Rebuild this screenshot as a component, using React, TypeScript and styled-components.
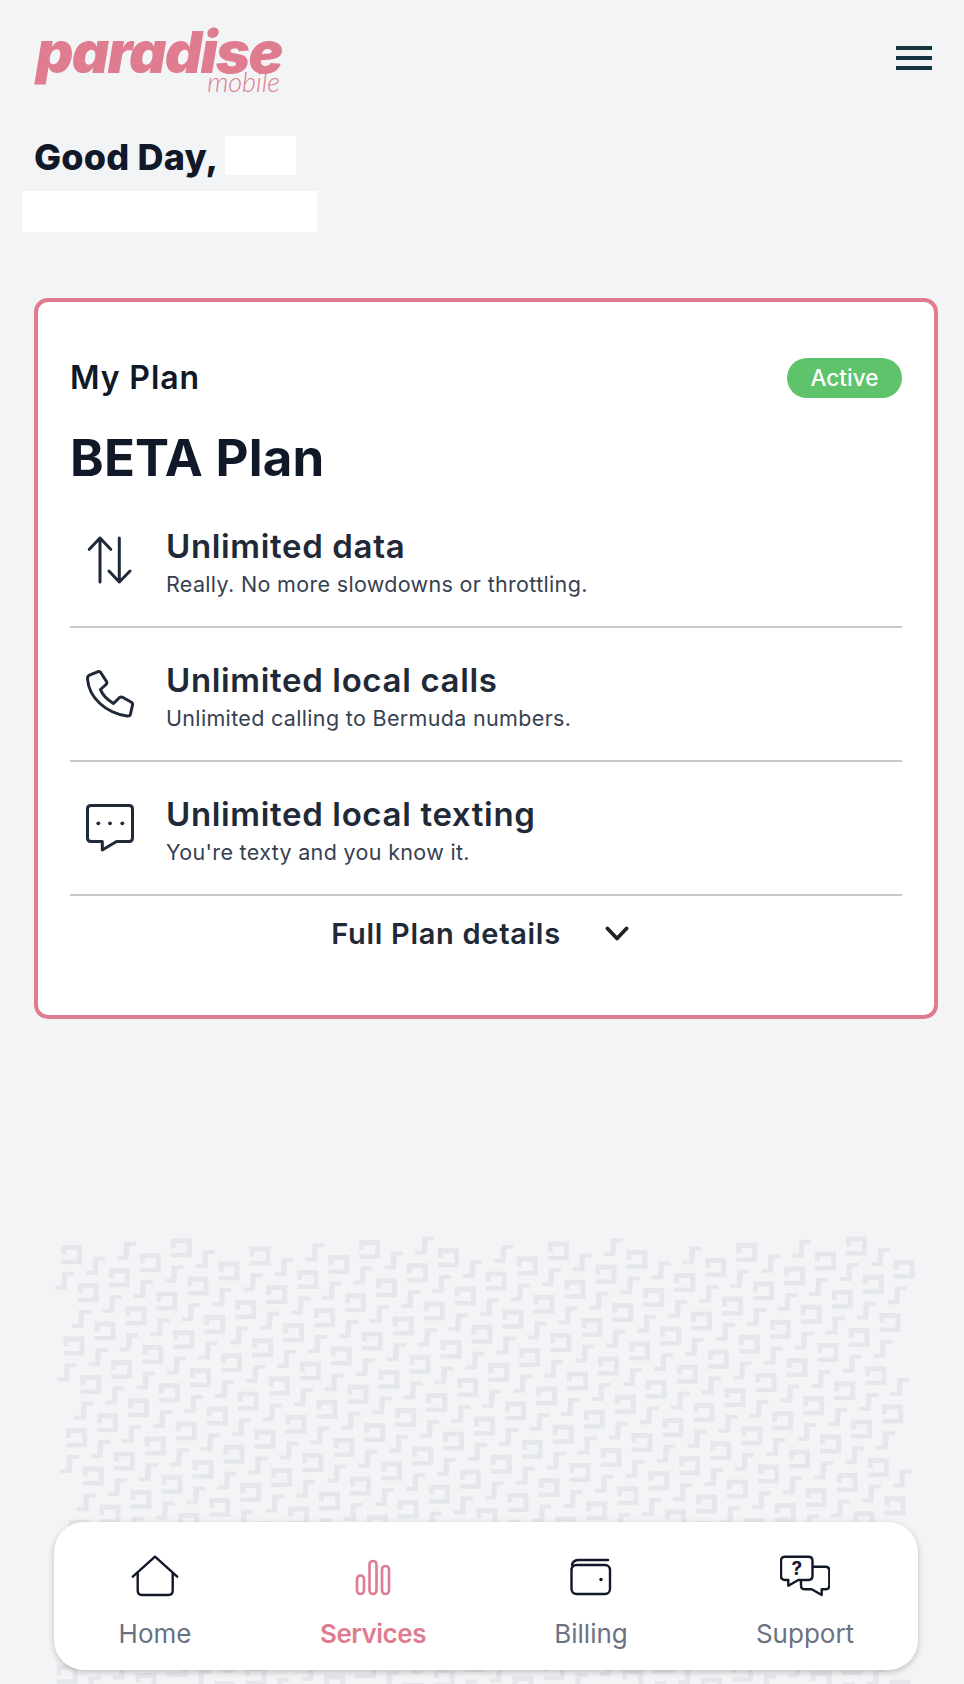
import React from "react";
import styled, { createGlobalStyle } from "styled-components";

const PINK = "#df7c90";
const INK = "#1f2937";
const FONT = `Inter, "Liberation Sans", sans-serif`;

const GlobalStyle = createGlobalStyle`
    html, body {
        margin: 0;
        padding: 0;
        background: #f3f4f6;
    }
    * {
        box-sizing: border-box;
    }
`;

type IconProps = { color?: string };

const ArrowsIcon = () => (
    <svg width="48" height="48" viewBox="0 0 48 48" fill="none" stroke={INK} strokeWidth="3" strokeLinecap="round" strokeLinejoin="round">
        <path d="M14 46V2M3.3 13.3 14 2l10.7 11.3" />
        <path d="M33.3 2v44M23 35l10.3 11L44 35" />
    </svg>
);

const PhoneIcon = () => (
    <svg width="48" height="48" viewBox="0 0 48 48" fill="none" stroke={INK} strokeWidth="3" strokeLinejoin="round">
        <path d="M3.5 5.2 11.5 1.8Q14 1 15 3L20.5 11.5Q21.5 13.5 19.5 15L14.5 19.5Q17 27 27.5 33.5L33 28Q35 26.5 37 27.5L45 32Q47 33 46.5 35L44.5 44Q44 46.5 41 46C20 43 3 28 1.5 9Q1.5 6 3.5 5.2Z" />
    </svg>
);

const ChatIcon = () => (
    <svg width="48" height="48" viewBox="0 0 48 48" fill="none" stroke={INK} strokeWidth="3" strokeLinejoin="round">
        <path d="M5 1.5H43Q46.5 1.5 46.5 5V34Q46.5 37.5 43 37.5H30.5L16.3 46V37.5H5Q1.5 37.5 1.5 34V5Q1.5 1.5 5 1.5Z" />
        <g fill={INK} stroke="none">
            <circle cx="12.3" cy="19.3" r="1.9" />
            <circle cx="24" cy="19.3" r="1.9" />
            <circle cx="36.3" cy="19.3" r="1.9" />
        </g>
    </svg>
);

const HomeIcon = ({ color = "#111827" }: IconProps) => (
    <svg width="48" height="48" viewBox="0 0 48 48" fill="none" stroke={color} strokeWidth="2.4" strokeLinejoin="round">
        <path d="M1.8 21.7 24 1.7l22.2 20" strokeLinecap="round" />
        <path d="M6.7 17.5V35.5Q6.7 40 11 40H37.5Q41.7 40 41.7 35.5V17.5" />
    </svg>
);

const BarsIcon = ({ color = PINK }: IconProps) => (
    <svg width="48" height="48" viewBox="0 0 48 48" fill="none" stroke={color} strokeWidth="2.6">
        <rect x="8" y="20.5" width="7" height="18.5" rx="3.5" />
        <rect x="20.5" y="6" width="7" height="33" rx="3.5" />
        <rect x="33" y="11" width="7" height="28" rx="3.5" />
    </svg>
);

const WalletIcon = ({ color = "#111827" }: IconProps) => (
    <svg width="48" height="48" viewBox="0 0 48 48" fill="none" stroke={color} strokeWidth="2.4" strokeLinecap="round">
        <rect x="4.5" y="10" width="38.5" height="29" rx="5" />
        <path d="M5 10Q6 5 12 5H41" />
        <circle cx="34" cy="24.5" r="1.7" fill={color} stroke="none" />
    </svg>
);

const SupportIcon = ({ color = "#111827" }: IconProps) => (
    <svg width="50" height="48" viewBox="0 0 50 48" fill="none" stroke={color} strokeWidth="2.4" strokeLinejoin="round">
        <path d="M5 1.8H28.5Q32.5 1.8 32.5 5.8V21Q32.5 25 28.5 25H18.3L8.3 30.7V25H5Q1 25 1 21V5.8Q1 1.8 5 1.8Z" />
        <path d="M33 11.7H45.5Q49.3 11.7 49.3 15.5V30.5Q49.3 34.3 45.5 34.3H41.7V40L31.7 34.3H25Q21 34.3 21 30.5V26" />
        <text x="16.7" y="19.5" textAnchor="middle" fontFamily={FONT} fontSize="19" fontWeight="700" fill={color} stroke="none">
            ?
        </text>
    </svg>
);

const ChevronIcon = () => (
    <svg width="24" height="15" viewBox="0 0 24 15" fill="none" stroke="#222" strokeWidth="3.8" strokeLinecap="round" strokeLinejoin="round">
        <path d="M2.5 2.5 12 12.5 21.5 2.5" />
    </svg>
);

// backdrop pattern: one hook and one step per cell of a slanted lattice
const PATTERN_W = 964;
const PATTERN_H = 450;
const HOOK = "M0 0H21V19H0V14.5H16V5H5V10H0Z";
const STEP = "M7 0H19V4H12.5L11.5 18H0V14H6.5Z";

const buildCells = () => {
    const cells: { d: string; x: number; y: number }[] = [];
    for (let i = -20; i < 30; i++) {
        for (let j = -10; j < 20; j++) {
            const x = 61 + i * 31 + j * 16.75;
            const y = 11 + i * -15 + j * 38.3;
            cells.push({ d: HOOK, x, y });
            cells.push({ d: STEP, x: x + 25, y: y + 11.7 });
        }
    }
    return cells.filter(c => c.x >= 54 && c.x <= 896 && c.y >= 1 && c.y <= PATTERN_H);
};

const Pattern = () => (
    <svg width={PATTERN_W} height={PATTERN_H} viewBox={`0 0 ${PATTERN_W} ${PATTERN_H}`} fill="#e5e7eb">
        {buildCells().map((c, i) => (
            <path key={i} d={c.d} transform={`translate(${c.x} ${c.y})`} />
        ))}
    </svg>
);

const features = [
    { icon: <ArrowsIcon />, title: "Unlimited data", text: "Really. No more slowdowns or throttling." },
    { icon: <PhoneIcon />, title: "Unlimited local calls", text: "Unlimited calling to Bermuda numbers." },
    { icon: <ChatIcon />, title: "Unlimited local texting", text: "You're texty and you know it." },
];

const tabs = [
    { label: "Home", Icon: HomeIcon },
    { label: "Services", Icon: BarsIcon, active: true },
    { label: "Billing", Icon: WalletIcon },
    { label: "Support", Icon: SupportIcon },
];

export default function App() {
    return (
        <Page>
            <GlobalStyle />
            <Header>
                <Logo>
                    <LogoWord>paradise</LogoWord>
                    <LogoSub>mobile</LogoSub>
                </Logo>
                <Burger aria-label="Menu">
                    <span />
                    <span />
                    <span />
                </Burger>
            </Header>

            <Greeting>
                <GreetingText>Good Day,</GreetingText>
                <Redacted $width={71} $height={39} />
            </Greeting>
            <RedactedLine />

            <Card>
                <CardTop>
                    <CardLabel>My Plan</CardLabel>
                    <Badge>Active</Badge>
                </CardTop>
                <PlanName>BETA Plan</PlanName>
                {features.map(f => (
                    <Feature key={f.title}>
                        <FeatureIcon>{f.icon}</FeatureIcon>
                        <FeatureBody>
                            <FeatureTitle>{f.title}</FeatureTitle>
                            <FeatureText>{f.text}</FeatureText>
                        </FeatureBody>
                    </Feature>
                ))}
                <DetailsRow>
                    Full Plan details
                    <ChevronIcon />
                </DetailsRow>
            </Card>

            <Backdrop>
                <Pattern />
                <NavBar>
                    {tabs.map(({ label, Icon, active }) => (
                        <Tab key={label} $active={active}>
                            <Icon />
                            {label}
                        </Tab>
                    ))}
                </NavBar>
            </Backdrop>
        </Page>
    );
}

const Page = styled.div`
    width: 964px;
    height: 1684px;
    overflow: hidden;
    display: flex;
    flex-direction: column;
    background: #f3f4f6;
    font-family: ${FONT};
`;

const Header = styled.header`
    display: flex;
    justify-content: space-between;
    align-items: flex-start;
    padding: 25px 32px 0 34px;
    height: 90px;
`;

const Logo = styled.div`
    position: relative;
    width: 250px;
    height: 65px;
    color: ${PINK};
    font-style: italic;
`;

const LogoWord = styled.span`
    position: absolute;
    left: 2px;
    top: 2px;
    font-family: Inter, sans-serif;
    font-size: 58px;
    line-height: 50px;
    font-weight: 900;
    letter-spacing: -1.7px;
`;

const LogoSub = styled.span`
    position: absolute;
    right: 4px;
    bottom: 0;
    font-family: Lato, sans-serif;
    font-size: 27px;
    line-height: 17px;
    font-weight: 300;
`;

const Burger = styled.div`
    margin-top: 21px;
    width: 36px;
    display: flex;
    flex-direction: column;
    gap: 6px;

    span {
        height: 4px;
        background: #14343f;
    }
`;

const Greeting = styled.div`
    margin: 46px 0 0 34px;
    display: flex;
    align-items: center;
    gap: 7px;
    height: 39px;
    font-size: 36px;
    font-weight: 800;
    letter-spacing: 0.2px;
    color: #111827;
`;

const GreetingText = styled.span`
    padding-top: 2px;
`;

const Redacted = styled.div<{ $width: number; $height: number }>`
    width: ${p => p.$width}px;
    height: ${p => p.$height}px;
    background: #fff;
`;

const RedactedLine = styled.div`
    margin: 16px 0 0 22px;
    width: 295px;
    height: 41px;
    background: #fff;
`;

const Card = styled.section`
    margin: 66px 26px 0 34px;
    height: 721px;
    padding: 56px 32px 0;
    background: #fff;
    border: 4px solid ${PINK};
    border-radius: 14px;
`;

const CardTop = styled.div`
    display: flex;
    justify-content: space-between;
    align-items: center;
    height: 40px;
`;

const CardLabel = styled.div`
    margin-top: -2px;
    font-size: 32px;
    font-weight: 600;
    letter-spacing: 0.9px;
    color: #111827;
`;

const Badge = styled.div`
    width: 115px;
    height: 40px;
    padding-bottom: 2px;
    border-radius: 20px;
    background: #5fc36b;
    color: #fff;
    font-size: 22.5px;
    font-weight: 500;
    display: flex;
    align-items: center;
    justify-content: center;
`;

const PlanName = styled.div`
    height: 96px;
    padding-top: 22px;
    display: flex;
    align-items: center;
    font-size: 51px;
    font-weight: 700;
    letter-spacing: 0.2px;
    color: #111827;
`;

const Feature = styled.div`
    height: 134px;
    display: flex;
    align-items: center;
    border-bottom: 2px solid #c8c8c8;
`;

const FeatureIcon = styled.div`
    width: 96px;
    padding-left: 16px;
    display: flex;
`;

const FeatureBody = styled.div`
    padding-top: 4px;
`;

const FeatureTitle = styled.div`
    font-size: 33px;
    line-height: 38px;
    font-weight: 600;
    letter-spacing: 0.65px;
    color: ${INK};
`;

const FeatureText = styled.div`
    margin-top: 5px;
    font-size: 21.5px;
    line-height: 28px;
    letter-spacing: 0.33px;
    color: #374151;
`;

const DetailsRow = styled.div`
    height: 74px;
    padding-right: 12px;
    display: flex;
    align-items: center;
    justify-content: center;
    gap: 44px;
    font-size: 29px;
    font-weight: 600;
    letter-spacing: 0.7px;
    color: ${INK};
`;

const Backdrop = styled.div`
    position: relative;
    margin-top: auto;
    height: ${PATTERN_H}px;
    flex: none;
`;

const NavBar = styled.nav`
    position: absolute;
    left: 54px;
    bottom: 14px;
    width: 864px;
    height: 148px;
    padding: 0 0 0 41px;
    display: flex;
    gap: 98px;
    background: #fff;
    border-radius: 30px;
    box-shadow: 0 2px 6px rgba(0, 0, 0, 0.22);
`;

const Tab = styled.div<{ $active?: boolean }>`
    width: 120px;
    padding-top: 33px;
    display: flex;
    flex-direction: column;
    align-items: center;
    gap: 15px;
    font-size: 26px;
    line-height: 32px;
    font-weight: ${p => (p.$active ? 600 : 400)};
    letter-spacing: ${p => (p.$active ? "-0.5px" : "0")};
    color: ${p => (p.$active ? PINK : "#6b7280")};

    &:last-child {
        margin-left: -4px;
    }
`;
